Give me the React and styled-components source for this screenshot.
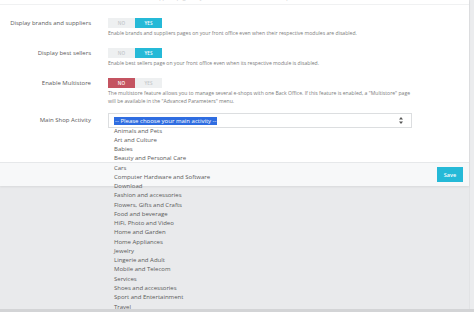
import styled, { createGlobalStyle } from "styled-components";

const activities = [
    "Animals and Pets",
    "Art and Culture",
    "Babies",
    "Beauty and Personal Care",
    "Cars",
    "Computer Hardware and Software",
    "Download",
    "Fashion and accessories",
    "Flowers, Gifts and Crafts",
    "Food and beverage",
    "HiFi, Photo and Video",
    "Home and Garden",
    "Home Appliances",
    "Jewelry",
    "Lingerie and Adult",
    "Mobile and Telecom",
    "Services",
    "Shoes and accessories",
    "Sport and Entertainment",
    "Travel",
];

export default function App() {
    return (
        <Page>
            <GlobalStyle />
            <Main>
                <Card>
                    <TopStrip>
                        <Help>Enable brands and suppliers pages on your front office even when their respective modules are disabled.</Help>
                    </TopStrip>
                    <Body>
                        <Row $gap={11}>
                            <Label>Display brands and suppliers</Label>
                            <div>
                                <Toggle>
                                    <Half>NO</Half>
                                    <Half $on="yes">YES</Half>
                                </Toggle>
                                <Help>Enable brands and suppliers pages on your front office even when their respective modules are disabled.</Help>
                            </div>
                        </Row>
                        <Row $gap={11}>
                            <Label>Display best sellers</Label>
                            <div>
                                <Toggle>
                                    <Half>NO</Half>
                                    <Half $on="yes">YES</Half>
                                </Toggle>
                                <Help>Enable best sellers page on your front office even when its respective module is disabled.</Help>
                            </div>
                        </Row>
                        <Row $gap={8}>
                            <Label>Enable Multistore</Label>
                            <div>
                                <Toggle>
                                    <Half $on="no">NO</Half>
                                    <Half>YES</Half>
                                </Toggle>
                                <Help>
                                    The multistore feature allows you to manage several e-shops with one Back Office. If this feature is enabled, a "Multistore" page
                                    <br />
                                    will be available in the "Advanced Parameters" menu.
                                </Help>
                            </div>
                        </Row>
                        <Row $gap={0}>
                            <Label $tall>Main Shop Activity</Label>
                            <SelectWrap>
                                <SelectBox>
                                    <Chosen>-- Please choose your main activity --</Chosen>
                                    <svg width="4" height="7" viewBox="0 0 4 7">
                                        <path d="M2 0 L4 2.6 L0 2.6 Z M2 7 L4 4.4 L0 4.4 Z" fill="#555" />
                                    </svg>
                                </SelectBox>
                                <OptionList>
                                    {activities.map((a) => (
                                        <li key={a}>{a}</li>
                                    ))}
                                </OptionList>
                            </SelectWrap>
                        </Row>
                    </Body>
                    <Footer>
                        <SaveButton>Save</SaveButton>
                    </Footer>
                </Card>
                <Filler />
            </Main>
            <RightEdge />
        </Page>
    );
}

const GlobalStyle = createGlobalStyle`
    body{
        margin:0;
        font-family:"Open Sans", "Liberation Sans", sans-serif;
    }
    ul{
        margin:0;
        padding:0;
        list-style:none;
    }
`;

const Page = styled.div`
    width:474px;
    height:312px;
    overflow:hidden;
    display:flex;
    background-color:#e9eaec;
    border-bottom:3px solid #d3d4d6;
    box-sizing:border-box;
`;

const Main = styled.div`
    width:469px;
    display:flex;
    flex-direction:column;
`;

const RightEdge = styled.div`
    width:5px;
    border-left:1px solid #e2e3e5;
    background-color:#ebecee;
    box-sizing:border-box;
`;

const Card = styled.div`
    background-color:#fff;
    box-shadow:0 1px 2px rgba(0,0,0,0.08);
    position:relative;
    z-index:1;
`;

// previous row, scrolled almost out of view
const TopStrip = styled.div`
    height:4px;
    overflow:hidden;
    padding-left:108px;
    border-bottom:1px solid #f0f1f2;
    p{
        margin-top:-6px;
        color:#c4c4c4;
    }
`;

const Body = styled.div`
    padding:13px 0 34px 0;
`;

const Row = styled.div`
    display:grid;
    grid-template-columns:91px 1fr;
    column-gap:17px;
    margin-bottom:${(props) => props.$gap}px;
`;

const Label = styled.div`
    font-size:6px;
    line-height:${(props) => (props.$tall ? "15px" : "11px")};
    color:#5a5a5a;
    text-align:right;
    white-space:nowrap;
`;

const Toggle = styled.div`
    display:flex;
    width:54px;
    height:10px;
`;

const Half = styled.div`
    flex:1;
    display:flex;
    align-items:center;
    justify-content:center;
    font-size:4.6px;
    font-weight:600;
    letter-spacing:0.1px;
    color:${(props) => (props.$on ? "#fff" : "#c3c6c9")};
    background-color:${(props) =>
        props.$on === "yes" ? "#25b9d7" : props.$on === "no" ? "#c45461" : "#eef0f1"};
`;

const Help = styled.p`
    margin:1px 0 0 0;
    font-size:5.1px;
    line-height:8px;
    color:#7c7c7c;
    white-space:nowrap;
`;

const SelectWrap = styled.div`
    position:relative;
    width:304px;
`;

const SelectBox = styled.div`
    height:15px;
    border:1px solid #dcdee0;
    box-sizing:border-box;
    display:flex;
    align-items:center;
    justify-content:space-between;
    padding:0 8px 0 5px;
    background-color:#fff;
`;

const Chosen = styled.span`
    background-color:#2f6de1;
    color:#fff;
    font-size:6px;
    line-height:8px;
    padding:0 1px;
`;

const OptionList = styled.ul`
    position:absolute;
    top:13.5px;
    left:6px;
    z-index:3;
    li{
        font-size:6px;
        line-height:9.26px;
        color:#5a5a5a;
        white-space:nowrap;
    }
`;

const Footer = styled.div`
    height:24px;
    box-sizing:border-box;
    border-top:1px solid #e6e8ea;
    background-color:#f7f8f9;
    display:flex;
    justify-content:flex-end;
    align-items:center;
    padding:0 6px;
`;

const SaveButton = styled.button`
    width:26px;
    height:15px;
    border:none;
    padding:0;
    background-color:#25b9d7;
    color:#fff;
    font-family:inherit;
    font-size:5.5px;
    font-weight:600;
`;

const Filler = styled.div`
    flex:1;
`;
